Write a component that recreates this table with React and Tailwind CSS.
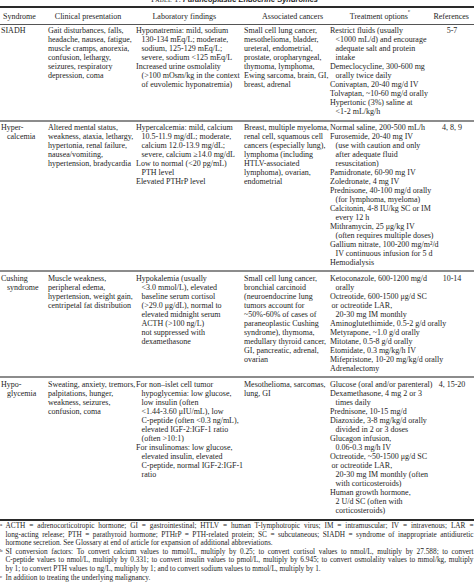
const cols = [
  'w-[47px] pl-[1px]',
  'w-[88px] pl-[1px]',
  'w-[108px] pl-[1px]',
  'w-[86px] pl-[1px]',
  'w-[106px] pl-[1px]',
  'flex-1 text-center pr-[5px]',
];

const indents = ['pl-[6px]', '', 'pl-[5.5px]', '', 'pl-[5.5px]', ''];

const rows = [
  {
    box: 'h-[97px] pt-px border-[#8c8c8c]',
    cells: [
      [['SIADH']],
      [['Gait disturbances, falls,', 'headache, nausea, fatigue,', 'muscle cramps, anorexia,', 'confusion, lethargy,', 'seizures, respiratory', 'depression, coma']],
      [
        ['Hyponatremia: mild, sodium', '130-134 mEq/L; moderate,', 'sodium, 125-129 mEq/L;', 'severe, sodium <125 mEq/L'],
        ['Increased urine osmolality', '(>100 mOsm/kg in the context', 'of euvolemic hyponatremia)'],
      ],
      [['Small cell lung cancer,', 'mesothelioma, bladder,', 'ureteral, endometrial,', 'prostate, oropharyngeal,', 'thymoma, lymphoma,', 'Ewing sarcoma, brain, GI,', 'breast, adrenal']],
      [
        ['Restrict fluids (usually', '<1000 mL/d) and encourage', 'adequate salt and protein', 'intake'],
        ['Demeclocycline, 300-600 mg', 'orally twice daily'],
        ['Conivaptan, 20-40 mg/d IV'],
        ['Tolvaptan, ~10-60 mg/d orally'],
        ['Hypertonic (3%) saline at', '<1-2 mL/kg/h'],
      ],
      [['5-7']],
    ],
  },
  {
    box: 'h-[150px] pt-px border-[#8c8c8c]',
    cells: [
      [['Hyper-', 'calcemia']],
      [['Altered mental status,', 'weakness, ataxia, lethargy,', 'hypertonia, renal failure,', 'nausea/vomiting,', 'hypertension, bradycardia']],
      [
        ['Hypercalcemia: mild, calcium', '10.5-11.9 mg/dL; moderate,', 'calcium 12.0-13.9 mg/dL;', 'severe, calcium ≥14.0 mg/dL'],
        ['Low to normal (<20 pg/mL)', 'PTH level'],
        ['Elevated PTHrP level'],
      ],
      [['Breast, multiple myeloma,', 'renal cell, squamous cell', 'cancers (especially lung),', 'lymphoma (including', 'HTLV-associated', 'lymphoma), ovarian,', 'endometrial']],
      [
        ['Normal saline, 200-500 mL/h'],
        ['Furosemide, 20-40 mg IV', '(use with caution and only', 'after adequate fluid', 'resuscitation)'],
        ['Pamidronate, 60-90 mg IV'],
        ['Zoledronate, 4 mg IV'],
        ['Prednisone, 40-100 mg/d orally', '(for lymphoma, myeloma)'],
        ['Calcitonin, 4-8 IU/kg SC or IM', 'every 12 h'],
        ['Mithramycin, 25 μg/kg IV', '(often requires multiple doses)'],
        ['Gallium nitrate, 100-200 mg/m²/d', 'IV continuous infusion for 5 d'],
        ['Hemodialysis'],
      ],
      [['4, 8, 9']],
    ],
  },
  {
    box: 'h-[106px] pt-[2px] border-[#8c8c8c]',
    cells: [
      [['Cushing', 'syndrome']],
      [['Muscle weakness,', 'peripheral edema,', 'hypertension, weight gain,', 'centripetal fat distribution']],
      [['Hypokalemia (usually', '<3.0 mmol/L), elevated', 'baseline serum cortisol', '(>29.0 μg/dL), normal to', 'elevated midnight serum', 'ACTH (>100 ng/L)', 'not suppressed with', 'dexamethasone']],
      [['Small cell lung cancer,', 'bronchial carcinoid', '(neuroendocrine lung', 'tumors account for', '~50%-60% of cases of', 'paraneoplastic Cushing', 'syndrome), thymoma,', 'medullary thyroid cancer,', 'GI, pancreatic, adrenal,', 'ovarian']],
      [
        ['Ketoconazole, 600-1200 mg/d', 'orally'],
        ['Octreotide, 600-1500 μg/d SC', '^or octreotide LAR,', '20-30 mg IM monthly'],
        ['Aminoglutethimide, 0.5-2 g/d orally'],
        ['Metyrapone, ~1.0 g/d orally'],
        ['Mitotane, 0.5-8 g/d orally'],
        ['Etomidate, 0.3 mg/kg/h IV'],
        ['Mifepristone, 10-20 mg/kg/d orally'],
        ['Adrenalectomy'],
      ],
      [['10-14']],
    ],
  },
  {
    box: 'h-[143px] pt-[2px] border-[#2a2a2a]',
    cells: [
      [['Hypo-', 'glycemia']],
      [['Sweating, anxiety, tremors,', 'palpitations, hunger,', 'weakness, seizures,', 'confusion, coma']],
      [
        ['For non–islet cell tumor', 'hypoglycemia: low glucose,', 'low insulin (often', '<1.44-3.60 μIU/mL), low', 'C-peptide (often <0.3 ng/mL),', 'elevated IGF-2:IGF-1 ratio', '(often >10:1)'],
        ['For insulinomas: low glucose,', 'elevated insulin, elevated', 'C-peptide, normal IGF-2:IGF-1', 'ratio'],
      ],
      [['Mesothelioma, sarcomas,', 'lung, GI']],
      [
        ['Glucose (oral and/or parenteral)'],
        ['Dexamethasone, 4 mg 2 or 3', 'times daily'],
        ['Prednisone, 10-15 mg/d'],
        ['Diazoxide, 3-8 mg/kg/d orally', 'divided in 2 or 3 doses'],
        ['Glucagon infusion,', '0.06-0.3 mg/h IV'],
        ['Octreotide, ~50-1500 μg/d SC', '^or octreotide LAR,', '20-30 mg IM monthly (often', 'with corticosteroids)'],
        ['Human growth hormone,', '2 U/d SC (often with', 'corticosteroids)'],
      ],
      [['4, 15-20']],
    ],
  },
];

const headers = [
  { label: 'Syndrome', pad: 'pl-[3px]' },
  { label: 'Clinical presentation', pad: 'pl-[8px]' },
  { label: 'Laboratory findings', pad: 'pl-[18px]' },
  { label: 'Associated cancers', pad: 'pl-[20px]' },
  { label: 'Treatment options', pad: 'pl-[22px]', sup: 'c' },
  { label: 'References', pad: '' },
];

const notes = [
  {
    sup: 'a',
    lines: [
      { t: 'ACTH = adrenocorticotropic hormone; GI = gastrointestinal; HTLV = human T-lymphotropic virus; IM = intramuscular; IV = intravenous; LAR =', full: true },
      { t: 'long-acting release; PTH = parathyroid hormone; PTHrP = PTH-related protein; SC = subcutaneous; SIADH = syndrome of inappropriate antidiuretic', full: true },
      { t: 'hormone secretion. See Glossary at end of article for expansion of additional abbreviations.' },
    ],
  },
  {
    sup: 'b',
    lines: [
      { t: 'SI conversion factors: To convert calcium values to mmol/L, multiply by 0.25; to convert cortisol values to nmol/L, multiply by 27.588; to convert', full: true },
      { t: 'C-peptide values to nmol/L, multiply by 0.331; to convert insulin values to pmol/L, multiply by 6.945; to convert osmolality values to mmol/kg, multiply', full: true },
      { t: 'by 1; to convert PTH values to ng/L, multiply by 1; and to convert sodium values to mmol/L, multiply by 1.' },
    ],
  },
  {
    sup: 'c',
    lines: [{ t: 'In addition to treating the underlying malignancy.' }],
  },
];

function Cell({ entries, indent }) {
  return entries.map((entry, i) => (
    <div key={i}>
      {entry.map((line, j) => {
        const minor = line.startsWith('^');
        const text = minor ? line.slice(1) : line;
        const pad = j === 0 ? '' : minor ? 'pl-[1.5px]' : indent;
        return (
          <div key={j} className={`whitespace-nowrap ${pad}`}>
            {text}
          </div>
        );
      })}
    </div>
  ));
}

export default function App() {
  return (
    <div className="w-[474px] h-[587px] overflow-hidden bg-white text-[#1e1e1e] font-['Liberation_Serif',serif] text-[8px] leading-[9px]">
      {/* title, cut off at the top of the crop */}
      <div className="h-[6px] overflow-hidden">
        <div className="-mt-[4px] text-center pr-[6px] whitespace-nowrap leading-[8px]">
          <span className="[font-variant:small-caps] tracking-[0.3px]">Table 1.</span>{' '}
          <span className="font-bold italic font-['Liberation_Sans',sans-serif] text-[7.5px]">
            Paraneoplastic Endocrine Syndromes
          </span>
        </div>
      </div>

      <div className="border-t-2 border-[#2a2a2a]">
        <div className="flex items-center h-[17px] border-b border-[#555]">
          {headers.map((h, i) => (
            <div key={h.label} className={`${cols[i]} ${h.pad} whitespace-nowrap`}>
              {h.label}
              {h.sup && <sup className="text-[5px] align-top relative -top-[1px]">{h.sup}</sup>}
            </div>
          ))}
        </div>

        {rows.map((row, r) => (
          <div key={r} className={`flex border-b-2 ${row.box}`}>
            {row.cells.map((entries, i) => (
              <div key={i} className={cols[i]}>
                <Cell entries={entries} indent={indents[i]} />
              </div>
            ))}
          </div>
        ))}
      </div>

      <div className="pt-px text-[7.3px] leading-[8.6px]">
        {notes.map((n) => (
          <div key={n.sup} className="flex">
            <div className="w-[5.5px] shrink-0 text-[5px] leading-[6px]">{n.sup}</div>
            <div>
              {n.lines.map((l, k) => (
                <div
                  key={k}
                  className={l.full ? 'w-[468px] whitespace-nowrap text-justify [text-align-last:justify]' : 'whitespace-nowrap'}
                >
                  {l.t}
                </div>
              ))}
            </div>
          </div>
        ))}
      </div>
    </div>
  );
}
